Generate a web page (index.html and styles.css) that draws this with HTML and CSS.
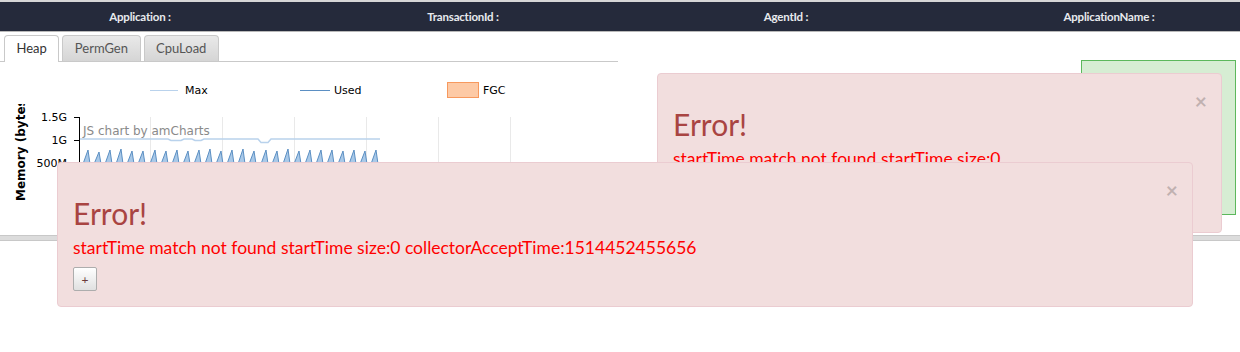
FILE: index.html
```html
<!DOCTYPE html>
<html lang="en">
<head>
    <meta charset="UTF-8">
    <meta name="viewport" content="width=device-width, initial-scale=1.0">
    <title>Inspector</title>
    <link rel="stylesheet" href="styles.css">
</head>
<body>
    <header class="navbar">
        <div class="navbar-item">Application :</div>
        <div class="navbar-item">TransactionId :</div>
        <div class="navbar-item">AgentId :</div>
        <div class="navbar-item">ApplicationName :</div>
    </header>

    <nav class="tabs">
        <span class="tab active">Heap</span>
        <span class="tab">PermGen</span>
        <span class="tab">CpuLoad</span>
    </nav>

    <main class="chart-panel">
        <svg class="chart" width="618" height="173" viewBox="0 62 618 173">
            <defs>
                <clipPath id="plotClip"><rect x="0" y="104" width="618" height="131"/></clipPath>
            </defs>
            <!-- legend -->
            <line x1="150" y1="90.5" x2="178" y2="90.5" stroke="#b9d2ec"/>
            <text x="185" y="94">Max</text>
            <line x1="300" y1="90.5" x2="330" y2="90.5" stroke="#5b8fc3"/>
            <text x="334" y="94">Used</text>
            <rect x="447.5" y="82.5" width="31" height="15" fill="#fdcaa6" stroke="#f7995e"/>
            <text x="483" y="94">FGC</text>

            <!-- grid -->
            <g stroke="#e9e9e9">
                <line x1="150.5" y1="117" x2="150.5" y2="235"/>
                <line x1="222.5" y1="117" x2="222.5" y2="235"/>
                <line x1="294.5" y1="117" x2="294.5" y2="235"/>
                <line x1="366.5" y1="117" x2="366.5" y2="235"/>
                <line x1="438.5" y1="117" x2="438.5" y2="235"/>
                <line x1="510.5" y1="117" x2="510.5" y2="235"/>
            </g>

            <!-- y axis -->
            <g stroke="#000">
                <line x1="79.5" y1="117" x2="79.5" y2="235"/>
                <line x1="74" y1="117.5" x2="80" y2="117.5"/>
                <line x1="74" y1="140.5" x2="80" y2="140.5"/>
                <line x1="74" y1="163.5" x2="80" y2="163.5"/>
            </g>
            <text class="tick" x="67" y="121">1.5G</text>
            <text class="tick" x="67" y="144">1G</text>
            <text class="tick" x="67" y="167">500M</text>
            <g clip-path="url(#plotClip)">
                <text class="axis-title" transform="translate(25,201) rotate(-90)">Memory (bytes)</text>
            </g>

            <text class="credit" x="83" y="135">JS chart by amCharts</text>

            <polyline class="max-line" points="80,139 168,139 171,140.5 181,140.5 184,139 192,139 195,140.5 201,140.5 204,139 258,139 261,142.5 268,142.5 271,139 380,139"/>

            <path class="used-line" d="M83,164 L88,150 L90,164Z M94,164 L99,152 L101,164Z M105,164 L110,150 L112,164Z M116,164 L121,149 L123,164Z M127,164 L132,151 L134,164Z M138,164 L143,151 L145,164Z M150,164 L155,150 L157,164Z M161,164 L166,151 L168,164Z M172,164 L177,150 L179,164Z M183,164 L188,151 L190,164Z M194,164 L199,150 L201,164Z M205,164 L210,149 L212,164Z M216,164 L221,151 L223,164Z M227,164 L232,150 L234,164Z M238,164 L243,149 L245,164Z M249,164 L254,151 L256,164Z M261,164 L266,150 L268,164Z M272,164 L277,151 L279,164Z M283,164 L288,149 L290,164Z M294,164 L299,151 L301,164Z M305,164 L310,150 L312,164Z M316,164 L321,150 L323,164Z M327,164 L332,150 L334,164Z M338,164 L343,151 L345,164Z M349,164 L354,150 L356,164Z M360,164 L365,151 L367,164Z M371,164 L376,150 L378,164Z"/>
        </svg>
    </main>
    <div class="scrollbar"></div>

    <div class="success-box"></div>

    <div class="alert alert-back">
        <span class="close">&times;</span>
        <h2>Error!</h2>
        <div class="alert-msg">startTime match not found startTime size:0</div>
    </div>

    <div class="alert alert-front">
        <span class="close">&times;</span>
        <h2>Error!</h2>
        <div class="alert-msg">startTime match not found startTime size:0 collectorAcceptTime:1514452455656</div>
        <button class="expand-btn">+</button>
    </div>
</body>
</html>
```

FILE: styles.css
```css
body {
    margin: 0;
    font-family: Lato, "Open Sans", sans-serif;
    background-color: #fff;
    border-top: 2px solid #d6d6d6;
}

/* top bar */
.navbar {
    display: grid;
    grid-template-columns: repeat(4, 280px);
    column-gap: 43px;
    align-items: center;
    height: 29px;
    background-color: #252a3b;
    border-bottom: 1px solid #b9b9b9;
    overflow: hidden;
}
.navbar-item {
    text-align: center;
    color: #e8eaee;
    font-size: 11.5px;
    font-weight: bold;
    letter-spacing: -0.2px;
}

/* tabs */
.tabs {
    display: flex;
    align-items: flex-end;
    gap: 3px;
    width: 618px;
    height: 27px;
    margin-top: 3px;
    padding-left: 4px;
    box-sizing: border-box;
    border-bottom: 1px solid #c9c9c9;
}
.tab {
    box-sizing: border-box;
    height: 26px;
    padding: 0 11.5px;
    font-size: 13px;
    line-height: 25px;
    color: #555;
    border: 1px solid #c9c9c9;
    border-bottom: none;
    border-radius: 4px 4px 0 0;
    background: linear-gradient(#e9e9e9, #d5d5d5);
}
.tab.active {
    height: 27px;
    margin-bottom: -1px;
    color: #333;
    background: #fff;
}

/* chart */
.chart-panel {
    width: 618px;
    height: 173px;
}
.chart {
    display: block;
}
.chart text {
    font-family: "DejaVu Sans", Verdana, sans-serif;
    font-size: 11px;
    fill: #000;
}
.chart .tick {
    text-anchor: end;
}
.chart .axis-title {
    font-size: 12px;
    font-weight: bold;
}
.chart .credit {
    font-size: 12px;
    fill: #8a8a8a;
}
.max-line {
    fill: none;
    stroke: #b9d2ec;
    stroke-width: 1.5;
}
.used-line {
    fill: #a9c9e8;
    stroke: #5b8fc3;
    stroke-width: 1;
    stroke-linejoin: round;
}

.scrollbar {
    height: 4px;
    background-color: #dcdcdc;
    border-top: 1px solid #c8c8c8;
    border-bottom: 1px solid #c8c8c8;
}

/* overlays */
.success-box {
    position: absolute;
    left: 1081px;
    top: 60px;
    width: 155px;
    height: 155px;
    box-sizing: border-box;
    background-color: #d6edd3;
    border: 1px solid #5cb85c;
}

.alert {
    position: absolute;
    box-sizing: border-box;
    padding: 15px;
    background-color: #f2dede;
    border: 1px solid #ebccd1;
    border-radius: 4px;
    color: #a94442;
}
.alert-back {
    left: 657px;
    top: 73px;
    width: 565px;
    height: 160px;
}
.alert-front {
    left: 57px;
    top: 162px;
    width: 1136px;
}
.alert h2 {
    margin: 19px 0 7px;
    font-size: 30px;
    font-weight: normal;
    line-height: 33px;
}
.alert-msg {
    color: #f00;
    font-size: 17.5px;
    line-height: 22px;
}
.close {
    position: absolute;
    top: 16px;
    right: 14px;
    font-size: 21px;
    font-weight: bold;
    line-height: 21px;
    color: #000;
    opacity: .2;
}
.expand-btn {
    display: block;
    width: 24px;
    height: 24px;
    margin-top: 8px;
    padding: 0;
    font-family: Lato, sans-serif;
    font-size: 12px;
    color: #6b3a3a;
    background: linear-gradient(#fff, #e0e0e0);
    border: 1px solid #adadad;
    border-radius: 2px;
}
```
